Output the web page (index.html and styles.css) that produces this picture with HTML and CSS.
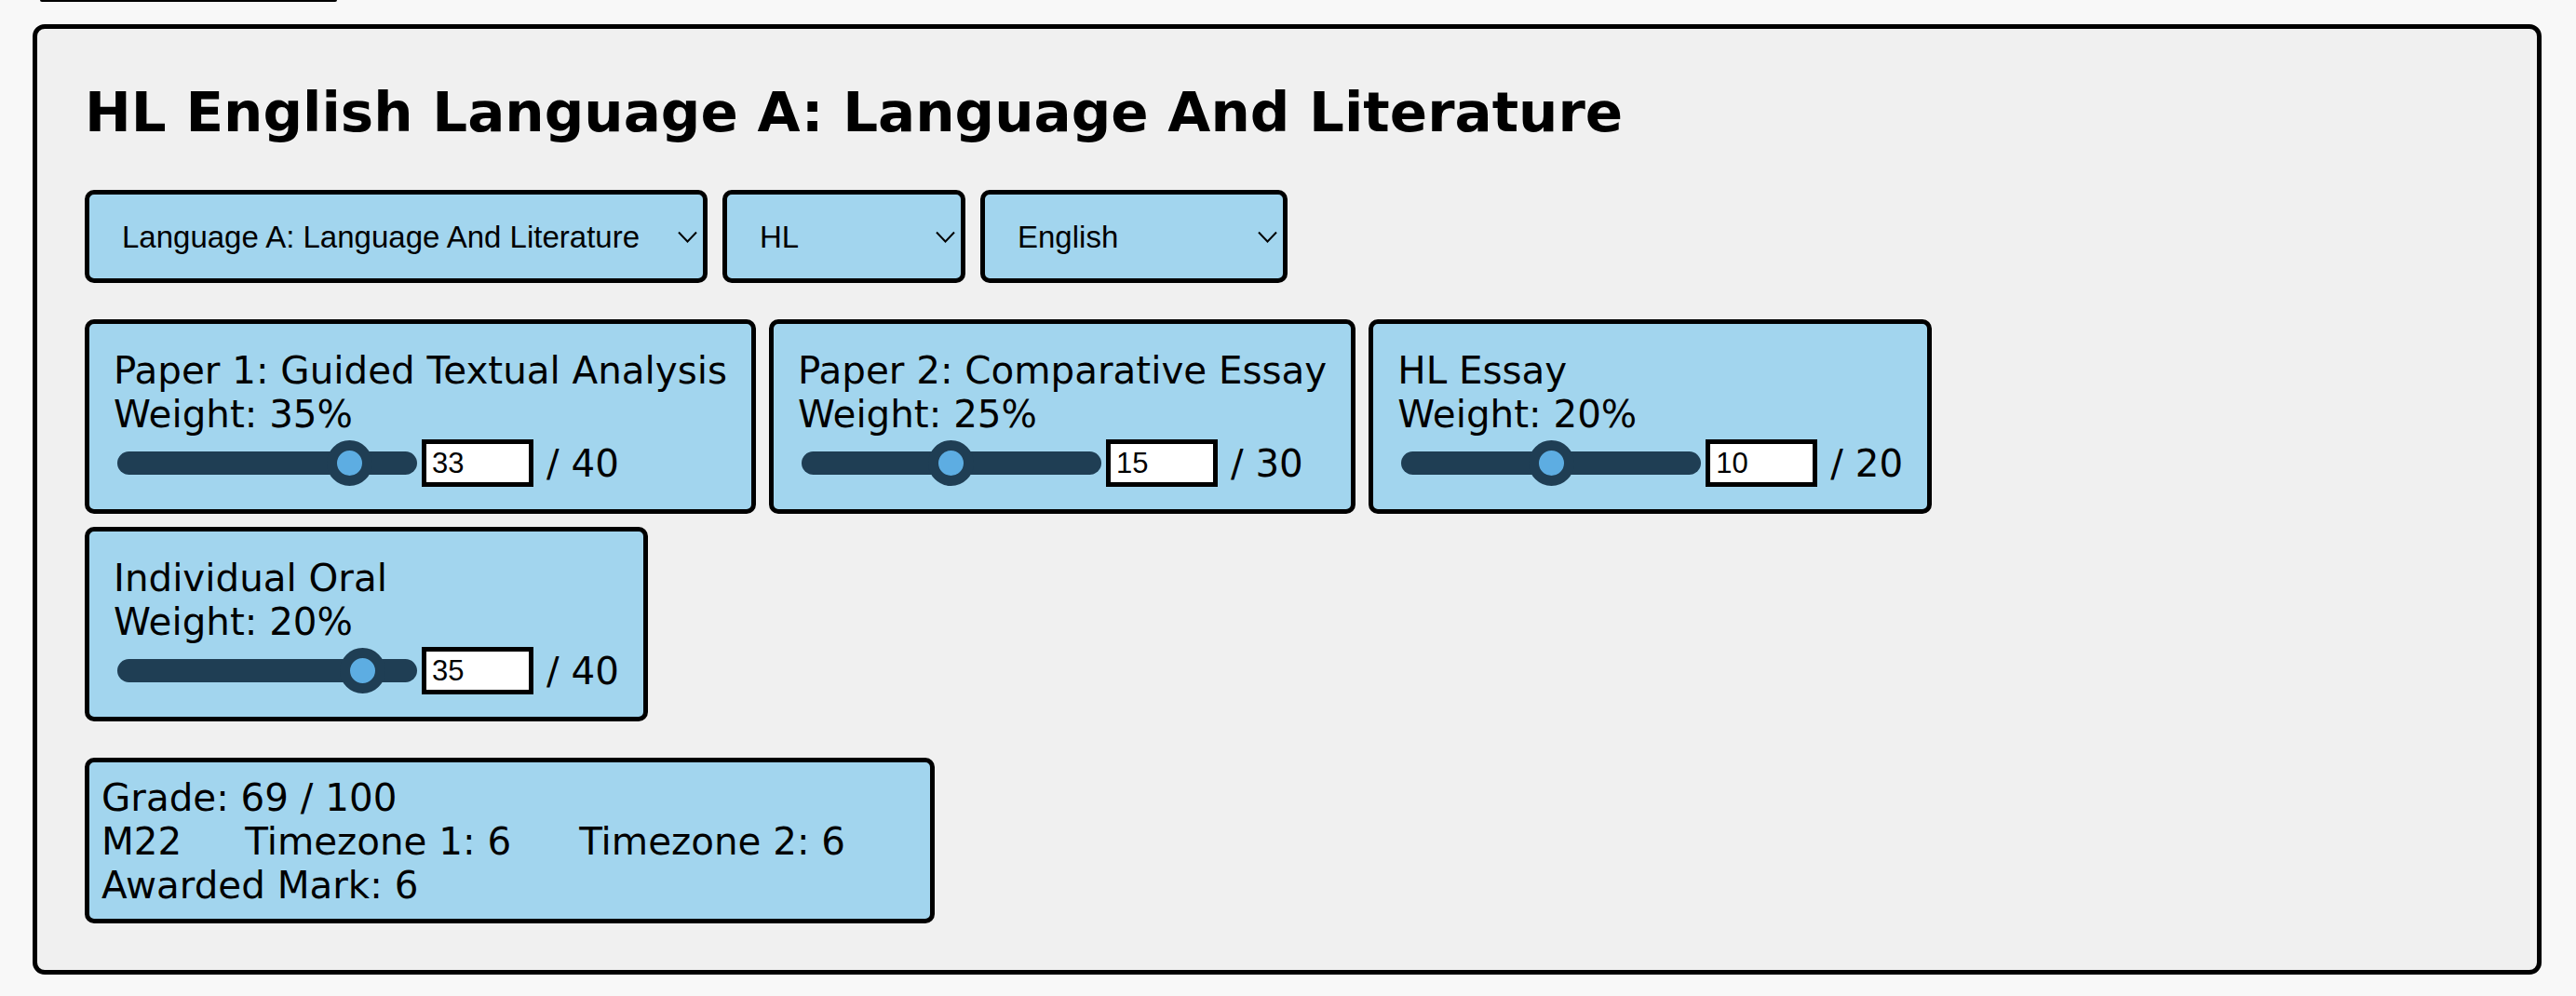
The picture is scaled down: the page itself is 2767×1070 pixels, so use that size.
FILE: index.html
```html
<!DOCTYPE html>
<html lang="en">
<head>
<meta charset="utf-8">
<title>HL English Language A: Language And Literature</title>
<link rel="stylesheet" href="styles.css">
</head>
<body>
<div class="topline"></div>
<main class="panel">
  <h1 class="title">HL English Language A: Language And Literature</h1>

  <div class="selects">
    <div class="select-wrap select-wrap--subject">
      <select class="select">
        <option>Language A: Language And Literature</option>
        <option>Language A: Literature</option>
      </select>
      <svg class="chevron" viewBox="0 0 21 13" width="21" height="13"><path d="M1 1.5 L10.5 11.5 L20 1.5" fill="none" stroke="#000" stroke-width="2"/></svg>
    </div>
    <div class="select-wrap select-wrap--level">
      <select class="select">
        <option>HL</option>
        <option>SL</option>
      </select>
      <svg class="chevron" viewBox="0 0 21 13" width="21" height="13"><path d="M1 1.5 L10.5 11.5 L20 1.5" fill="none" stroke="#000" stroke-width="2"/></svg>
    </div>
    <div class="select-wrap select-wrap--lang">
      <select class="select">
        <option>English</option>
      </select>
      <svg class="chevron" viewBox="0 0 21 13" width="21" height="13"><path d="M1 1.5 L10.5 11.5 L20 1.5" fill="none" stroke="#000" stroke-width="2"/></svg>
    </div>
  </div>

  <div class="cards">
    <section class="card">
      <div class="card-line">Paper 1: Guided Textual Analysis</div>
      <div class="card-line">Weight: 35%</div>
      <div class="score-row">
        <input class="slider" type="range" min="0" max="40" value="33">
        <input class="score-input" type="number" min="0" max="40" value="33">
        <span class="score-max">/ 40</span>
      </div>
    </section>
    <section class="card">
      <div class="card-line">Paper 2: Comparative Essay</div>
      <div class="card-line">Weight: 25%</div>
      <div class="score-row">
        <input class="slider" type="range" min="0" max="30" value="15">
        <input class="score-input" type="number" min="0" max="30" value="15">
        <span class="score-max">/ 30</span>
      </div>
    </section>
    <section class="card">
      <div class="card-line">HL Essay</div>
      <div class="card-line">Weight: 20%</div>
      <div class="score-row">
        <input class="slider" type="range" min="0" max="20" value="10">
        <input class="score-input" type="number" min="0" max="20" value="10">
        <span class="score-max">/ 20</span>
      </div>
    </section>
    <section class="card">
      <div class="card-line">Individual Oral</div>
      <div class="card-line">Weight: 20%</div>
      <div class="score-row">
        <input class="slider" type="range" min="0" max="40" value="35">
        <input class="score-input" type="number" min="0" max="40" value="35">
        <span class="score-max">/ 40</span>
      </div>
    </section>
  </div>

  <div class="result">
    <div class="result-line">Grade: 69 / 100</div>
    <div class="result-line"><span class="result-item result-item--session">M22</span><span class="result-item result-item--tz1">Timezone 1: 6</span><span class="result-item result-item--tz2">Timezone 2: 6</span></div>
    <div class="result-line">Awarded Mark: 6</div>
  </div>
</main>
</body>
</html>
```

FILE: styles.css
```css
html, body {
  margin: 0;
  padding: 0;
  background: #f8f8f8;
}

body {
  font-family: "DejaVu Sans", Verdana, sans-serif;
  color: #000;
}

.topline {
  width: 319px;
  height: 2px;
  margin-left: 43px;
  background: #000;
  border-radius: 0 0 2px 2px;
}

.panel {
  margin: 24px 37px 0 35px;
  border: 5px solid #000;
  border-radius: 13px;
  background: #f0f0f0;
  padding: 56px 51px 50px 51px;
}

.title {
  margin: 0;
  font-family: "DejaVu Sans", Verdana, sans-serif;
  font-weight: bold;
  font-size: 59.5px;
  line-height: 68px;
}

.selects {
  display: flex;
  gap: 16px;
  margin-top: 49px;
}

.select-wrap {
  position: relative;
}

.select-wrap--subject { width: 669px; }
.select-wrap--level { width: 261px; }
.select-wrap--lang { width: 330px; }

.select {
  -webkit-appearance: none;
  appearance: none;
  display: block;
  box-sizing: border-box;
  width: 100%;
  height: 100px;
  margin: 0;
  padding: 0 50px 0 35px;
  border: 5px solid #000;
  border-radius: 10px;
  background: #a2d5ee;
  color: #000;
  font-family: "Liberation Sans", Arial, sans-serif;
  font-size: 33px;
  outline: none;
}

.chevron {
  position: absolute;
  right: 11px;
  top: 50%;
  margin-top: -6px;
  pointer-events: none;
}

.cards {
  display: flex;
  flex-wrap: wrap;
  align-items: flex-start;
  gap: 14px 14px;
  max-width: 2100px;
  margin-top: 39px;
}

.card {
  border: 5px solid #000;
  border-radius: 10px;
  background: #a2d5ee;
  padding: 27px 26px 24px 26px;
}

.card-line {
  font-size: 40.4px;
  line-height: 47px;
  white-space: nowrap;
}

.score-row {
  display: flex;
  align-items: center;
  margin-top: 3px;
  height: 51px;
}

.slider {
  -webkit-appearance: none;
  appearance: none;
  width: 322px;
  height: 48px;
  margin: 0 0 0 4px;
  background: transparent;
}

.slider::-webkit-slider-runnable-track {
  height: 25px;
  border-radius: 13px;
  background: #1f3e54;
}

.slider::-webkit-slider-thumb {
  -webkit-appearance: none;
  appearance: none;
  box-sizing: border-box;
  width: 49px;
  height: 49px;
  margin-top: -12px;
  border-radius: 50%;
  border: 11px solid #1f3e54;
  background: #5dade2;
}

.score-input {
  box-sizing: border-box;
  width: 120px;
  height: 51px;
  margin: 0 0 0 5px;
  padding: 0 6px;
  border: 5px solid #000;
  border-radius: 0;
  background: #fff;
  font-family: "Liberation Sans", Arial, sans-serif;
  font-size: 31px;
  color: #000;
  outline: none;
  -moz-appearance: textfield;
}

.score-input::-webkit-inner-spin-button,
.score-input::-webkit-outer-spin-button {
  -webkit-appearance: none;
  margin: 0;
}

.score-max {
  margin-left: 14px;
  font-size: 40.4px;
  white-space: nowrap;
}

.result {
  display: inline-block;
  margin-top: 39px;
  border: 5px solid #000;
  border-radius: 10px;
  background: #a2d5ee;
  padding: 15px 13px 12px 13px;
}

.result-line {
  font-size: 40.4px;
  line-height: 47px;
  white-space: nowrap;
}

.result-item--session { margin-right: 68px; }
.result-item--tz1 { margin-right: 73px; }
.result-item--tz2 { margin-right: 78px; }
```
